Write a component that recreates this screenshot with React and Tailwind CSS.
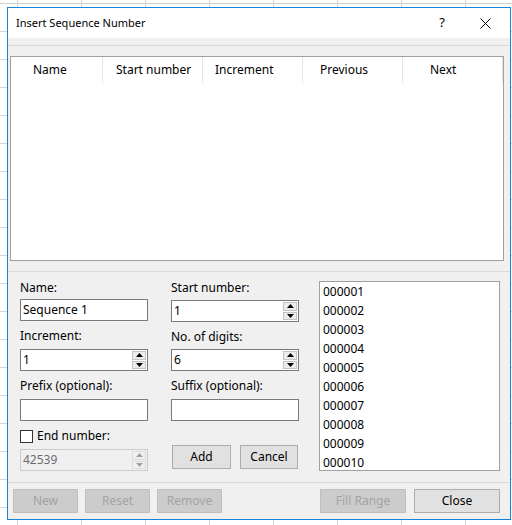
import React from "react";

const FONT = "font-['Noto_Sans',sans-serif]";

function SpinArrows({ disabled }) {
  const fill = disabled ? "#a0a0a0" : "#000";
  const btn = `flex flex-1 items-center justify-center border ${
    disabled ? "border-[#dcdcdc] bg-[#f0f0f0]" : "border-[#c4c4c4] bg-[#ececec]"
  }`;
  return (
    <div className="flex w-[15px] flex-col gap-[1px] py-[1px] pr-[1px]">
      <div className={btn}>
        <svg width="7" height="4" viewBox="0 0 7 4">
          <polygon points="3.5,0 7,4 0,4" fill={fill} />
        </svg>
      </div>
      <div className={btn}>
        <svg width="7" height="4" viewBox="0 0 7 4">
          <polygon points="0,0 7,0 3.5,4" fill={fill} />
        </svg>
      </div>
    </div>
  );
}

function Spin({ value, disabled }) {
  return (
    <div
      className={`flex h-[22px] w-[128px] border ${
        disabled ? "border-[#cccccc] bg-[#f0f0f0] text-[#6d6d6d]" : "border-[#7a7a7a] bg-white text-black"
      }`}
    >
      <div className="flex-1 pl-[2px] text-[12px] leading-[20px]">{value}</div>
      <SpinArrows disabled={disabled} />
    </div>
  );
}

function TextBox({ value }) {
  return (
    <div className="h-[22px] w-[128px] border border-[#7a7a7a] bg-white pl-[2px] text-[12px] leading-[20px] text-black">
      {value}
    </div>
  );
}

function Label({ children, className = "" }) {
  return <div className={`h-[16px] text-[12px] leading-[16px] text-black ${className}`}>{children}</div>;
}

function Button({ children, disabled, className = "" }) {
  return (
    <div
      className={`flex h-[24px] items-center justify-center border text-[12px] ${
        disabled
          ? "border-[#bfbfbf] bg-[#cccccc] text-[#a3a3a3]"
          : "border-[#adadad] bg-[#e1e1e1] text-black"
      } ${className}`}
    >
      {children}
    </div>
  );
}

// list view header columns: width and left inset of the caption
const columns = [
  { name: "Name", cls: "w-[92px] pl-[22px]" },
  { name: "Start number", cls: "w-[100px] pl-[13px]" },
  { name: "Increment", cls: "w-[100px] pl-[12px]" },
  { name: "Previous", cls: "w-[100px] pl-[17px]" },
  { name: "Next", cls: "w-[100px] pl-[27px]" },
];

const seq = ["000001", "000002", "000003", "000004", "000005", "000006", "000007", "000008", "000009", "000010"];

export default function App() {
  return (
    <div
      className={`${FONT} relative h-[525px] w-[512px] overflow-hidden bg-white bg-[linear-gradient(to_right,#d4d4d4_1px,transparent_1px),linear-gradient(to_bottom,#d4d4d4_1px,transparent_1px)] [background-position:17px_3px] [background-size:64px_28px] pl-[7px] pt-[7px]`}
    >
      {/* dialog window */}
      <div className="flex h-[513px] w-[504px] flex-col border border-[#1883d7] bg-[#f0f0f0]">
        {/* title bar */}
        <div className="flex h-[30px] items-center bg-white pl-[8px]">
          <div className="flex-1 text-[11px] text-black">Insert Sequence Number</div>
          <div className="w-[20px] text-center text-[13px] text-black">?</div>
          <div className="flex w-[58px] items-center pl-[28px]">
            <svg width="11" height="11" viewBox="0 0 11 11">
              <path d="M0.5 0.5 L10.5 10.5 M10.5 0.5 L0.5 10.5" stroke="#000" strokeWidth="1" />
            </svg>
          </div>
        </div>

        {/* upper panel with list view */}
        <div className="mt-[7px] flex flex-col border-t border-[#dadada] px-[2px] pt-[10px]">
          <div className="h-[205px] w-[494px] border border-[#a0a0a0] bg-white">
            <div className="flex h-[26px]">
              {columns.map((c) => (
                <div
                  key={c.name}
                  className={`${c.cls} flex items-center border-r border-[#e5e5e5] text-[12px] text-black`}
                >
                  {c.name}
                </div>
              ))}
            </div>
          </div>
        </div>

        {/* lower panel with inputs */}
        <div className="mt-[10px] flex h-[212px] border-t border-b border-[#dadada] pl-[12px]">
          <div className="flex w-[128px] flex-col pt-[8px]">
            <Label>Name:</Label>
            <div className="mt-[3px]">
              <TextBox value="Sequence 1" />
            </div>
            <Label className="mt-[7px]">Increment:</Label>
            <div className="mt-[5px]">
              <Spin value="1" />
            </div>
            <Label className="mt-[7px]">Prefix (optional):</Label>
            <div className="mt-[5px]">
              <TextBox value="" />
            </div>
            <div className="mt-[7px] flex h-[16px] items-center gap-[4px]">
              <div className="h-[13px] w-[13px] border border-[#333333] bg-white" />
              <span className="text-[12px] text-black">End number:</span>
            </div>
            <div className="mt-[5px]">
              <Spin value="42539" disabled />
            </div>
          </div>

          <div className="ml-[23px] flex w-[128px] flex-col pt-[8px]">
            <Label>Start number:</Label>
            <div className="mt-[4px]">
              <Spin value="1" />
            </div>
            <Label className="mt-[7px]">No. of digits:</Label>
            <div className="mt-[4px]">
              <Spin value="6" />
            </div>
            <Label className="mt-[7px]">Suffix (optional):</Label>
            <div className="mt-[5px]">
              <TextBox value="" />
            </div>
            <div className="mt-[24px] flex gap-[9px] pl-[1px]">
              <Button className="w-[59px]">Add</Button>
              <Button className="w-[58px]">Cancel</Button>
            </div>
          </div>

          <div className="ml-[20px] mt-[9px] flex h-[190px] w-[181px] flex-col overflow-hidden border border-[#a0a0a0] bg-white pl-[3px]">
            {seq.map((s) => (
              <div key={s} className="h-[19px] shrink-0 text-[12px] leading-[19px] text-black">
                {s}
              </div>
            ))}
          </div>
        </div>

        {/* bottom button bar */}
        <div className="flex pt-[6px] pl-[5px]">
          <Button disabled className="w-[65px]">New</Button>
          <Button disabled className="ml-[7px] w-[65px]">Reset</Button>
          <Button disabled className="ml-[7px] w-[65px]">Remove</Button>
          <Button disabled className="ml-[98px] w-[86px]">Fill Range</Button>
          <Button className="ml-[8px] w-[86px]">Close</Button>
        </div>
      </div>
    </div>
  );
}
